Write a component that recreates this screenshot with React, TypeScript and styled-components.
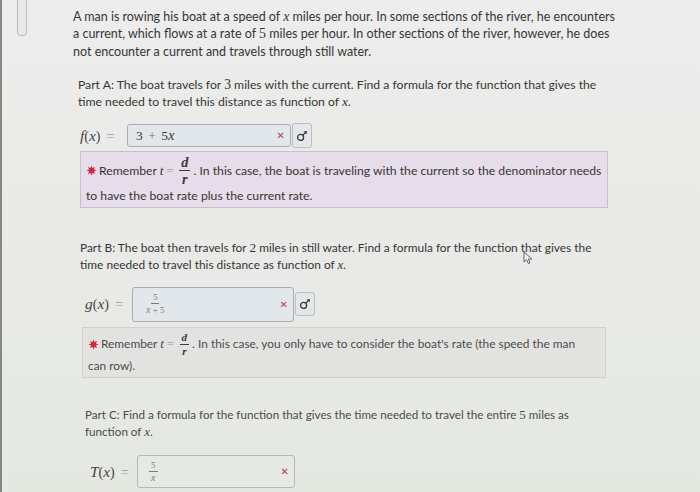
import React from 'react';
import styled, { createGlobalStyle } from 'styled-components';

const GlobalStyle = createGlobalStyle`
    html, body {
        margin: 0;
        padding: 0;
    }

    body {
        width: 700px;
        height: 492px;
        overflow: hidden;
        background: linear-gradient(180deg, #ecedec 0%, #e9eae7 55%, #e4e8e1 100%);
        font-family: Lato, "Open Sans", sans-serif;
    }
`;

function Star() {
    return (
        <StarIcon viewBox="0 0 12 12">
            <path
                d="M6 0.5 L7.1 3.4 L9.9 2.1 L8.6 4.9 L11.5 6 L8.6 7.1 L9.9 9.9 L7.1 8.6 L6 11.5 L4.9 8.6 L2.1 9.9 L3.4 7.1 L0.5 6 L3.4 4.9 L2.1 2.1 L4.9 3.4 Z"
                fill="#cf2a3f"
            />
        </StarIcon>
    );
}

function ToolGlyph() {
    return (
        <svg width="12" height="12" viewBox="0 0 12 12">
            <circle cx="4.6" cy="7.4" r="3" fill="none" stroke="#3a3a3a" strokeWidth="1.3" />
            <path d="M6.8 5.2 L9.6 2.4" stroke="#3a3a3a" strokeWidth="1.3" />
            <path d="M7.6 1.4 L10.9 1.1 L10.6 4.4 Z" fill="#3a3a3a" />
        </svg>
    );
}

function Fraction({ top, bottom, size, muted }: { top: React.ReactNode; bottom: React.ReactNode; size: number; muted?: boolean }) {
    return (
        <Frac $size={size} $muted={muted}>
            <Num>{top}</Num>
            <Den>{bottom}</Den>
        </Frac>
    );
}

function App() {
    return (
        <Page>
            <GlobalStyle />
            <ScrollThumb />

            <Section $indent={73} $gap={0} $size={12.5}>
                <Para>
                    A man is rowing his boat at a speed of <V>x</V> miles per hour. In some sections of the river, he encounters
                    <br />
                    a current, which flows at a rate of <N>5</N> miles per hour. In other sections of the river, however, he does
                    <br />
                    not encounter a current and travels through still water.
                </Para>
            </Section>

            <Section $indent={78} $gap={15.5} $size={12.2}>
                <Para>
                    Part A: The boat travels for <N>3</N> miles with the current. Find a formula for the function that gives the
                    <br />
                    time needed to travel this distance as function of <V>x</V>.
                </Para>
            </Section>

            <AnswerRow $indent={80} $gap={12.5}>
                <Label>
                    <V>f</V>(<V>x</V>)<Eq>=</Eq>
                </Label>
                <InputBox $width={164} $height={23}>
                    <Expr>
                        3 <Op>+</Op> 5<V>x</V>
                    </Expr>
                    <ClearMark>✕</ClearMark>
                </InputBox>
                <ToolButton $height={23}>
                    <ToolGlyph />
                </ToolButton>
            </AnswerRow>

            <Hint $indent={80} $width={528} $gap={3} $tone="purple">
                <HintLine>
                    <Star />
                    Remember <V>t</V> <Eq>=</Eq>
                    <Fraction size={13} top={<V>d</V>} bottom={<V>r</V>} />. In this case, the boat is traveling with the current so the denominator needs
                </HintLine>
                <HintTail>to have the boat rate plus the current rate.</HintTail>
            </Hint>

            <Section $indent={80} $gap={31} $size={11.9}>
                <Para>
                    Part B: The boat then travels for <N>2</N> miles in still water. Find a formula for the function that gives the
                    <br />
                    time needed to travel this distance as function of <V>x</V>.
                </Para>
            </Section>

            <AnswerRow $indent={85} $gap={13}>
                <Label>
                    <V>g</V>(<V>x</V>)<Eq>=</Eq>
                </Label>
                <InputBox $width={162} $height={35}>
                    <Fraction size={9} muted top="5" bottom={<><V>x</V> + 5</>} />
                    <ClearMark>✕</ClearMark>
                </InputBox>
                <ToolButton $height={22}>
                    <ToolGlyph />
                </ToolButton>
            </AnswerRow>

            <Hint $indent={82} $width={524} $gap={5} $tone="gray">
                <HintLine>
                    <Star />
                    Remember <V>t</V> <Eq>=</Eq>
                    <Fraction size={10} top={<V>d</V>} bottom={<V>r</V>} />. In this case, you only have to consider the boat's rate (the speed the man
                </HintLine>
                <HintTail>can row).</HintTail>
            </Hint>

            <Section $indent={85} $gap={28} $size={11.65} $muted>
                <Para>
                    Part C: Find a formula for the function that gives the time needed to travel the entire <N>5</N> miles as
                    <br />
                    function of <V>x</V>.
                </Para>
            </Section>

            <AnswerRow $indent={90} $gap={13.5}>
                <Label>
                    <V>T</V>(<V>x</V>)<Eq>=</Eq>
                </Label>
                <InputBox $width={158} $height={33} $plain>
                    <Fraction size={9} muted top="5" bottom={<V>x</V>} />
                    <ClearMark>✕</ClearMark>
                </InputBox>
            </AnswerRow>

            <Cursor viewBox="0 0 10 14">
                <path d="M1 1 L1 11 L3.6 8.6 L5.4 12.6 L7 11.9 L5.3 8 L8.8 8 Z" fill="#f4f4f4" stroke="#555" strokeWidth="0.9" />
            </Cursor>
        </Page>
    );
}

const Page = styled.div`
    position: relative;
    height: 492px;
    box-sizing: border-box;
    border-left: 2px solid #858782;
    padding-top: 7.5px;
`;

const ScrollThumb = styled.div`
    position: absolute;
    left: 15px;
    top: -6px;

    width: 8px;
    height: 40px;

    border: 1.5px solid #b7bbc0;
    border-radius: 4px;
    background-color: #e7e9eb;
`;

const Section = styled.section<{ $indent: number; $gap: number; $size: number; $muted?: boolean }>`
    margin-left: ${p => p.$indent - 2}px;
    margin-top: ${p => p.$gap}px;

    font-size: ${p => p.$size}px;
    color: ${p => (p.$muted ? '#4a4c4a' : '#363636')};
`;

const Para = styled.p`
    margin: 0;
    line-height: 17.5px;
    white-space: nowrap;
`;

const V = styled.span`
    font-family: "Liberation Serif", "DejaVu Serif", serif;
    font-style: italic;
    font-size: 1.1em;
`;

const N = styled.span`
    font-family: "Liberation Serif", "DejaVu Serif", serif;
    font-size: 1.12em;
`;

const Eq = styled.span`
    font-family: "Liberation Serif", "DejaVu Serif", serif;
    color: #9a9c9e;
    margin: 0 3px;
`;

const Op = styled.span`
    color: #777;
    margin: 0 2px;
`;

const AnswerRow = styled.div<{ $indent: number; $gap: number }>`
    display: flex;
    align-items: center;

    margin-left: ${p => p.$indent - 2}px;
    margin-top: ${p => p.$gap}px;
`;

const Label = styled.span`
    width: 47px;
    flex: none;

    font-family: "Liberation Serif", "DejaVu Serif", serif;
    font-size: 14px;
    color: #444;
    white-space: nowrap;

    ${Eq} {
        margin-left: 6px;
    }
`;

const InputBox = styled.div<{ $width: number; $height: number; $plain?: boolean }>`
    display: flex;
    justify-content: space-between;
    align-items: center;

    width: ${p => p.$width}px;
    height: ${p => p.$height}px;
    box-sizing: border-box;
    padding: 0 5px 0 8px;

    border: 1.5px solid ${p => (p.$plain ? '#b4b9b4' : '#a5acb4')};
    border-radius: 3px;
    background-color: ${p => (p.$plain ? '#e5e9e4' : '#e2e7eb')};
`;

const Expr = styled.span`
    font-family: "Liberation Serif", "DejaVu Serif", serif;
    font-size: 13.5px;
    color: #3a3a3a;
`;

const ClearMark = styled.span`
    font-family: "DejaVu Sans", sans-serif;
    font-size: 10px;
    font-weight: 700;
    color: #c43a52;
`;

const ToolButton = styled.div<{ $height: number }>`
    display: flex;
    justify-content: center;
    align-items: center;

    width: 18px;
    height: ${p => p.$height}px;
    margin-left: 1px;

    border: 1px solid #b9bec3;
    border-radius: 3px;
    background-color: #e4e7ea;
`;

const Hint = styled.div<{ $indent: number; $width: number; $gap: number; $tone: 'purple' | 'gray' }>`
    width: ${p => p.$width}px;
    box-sizing: border-box;
    margin-left: ${p => p.$indent - 2}px;
    margin-top: ${p => p.$gap}px;
    padding: ${p => (p.$tone === 'purple' ? '3px 6px 3px 5px' : '4px 6px 3px 5px')};

    border: 1px solid ${p => (p.$tone === 'purple' ? '#cbbdd0' : '#d0d1ce')};
    background-color: ${p => (p.$tone === 'purple' ? '#e7dce9' : '#e2e3e1')};

    font-size: ${p => (p.$tone === 'purple' ? 12.2 : 11.9)}px;
    color: ${p => (p.$tone === 'purple' ? '#363636' : '#4c4c4c')};
`;

const HintLine = styled.div`
    display: flex;
    align-items: center;
    white-space: pre;
    line-height: 16px;
`;

const HintTail = styled.div`
    line-height: 16px;
    margin-top: 1px;
`;

const StarIcon = styled.svg`
    width: 11px;
    height: 11px;
    margin-right: 2px;
    flex: none;
`;

const Frac = styled.span<{ $size: number; $muted?: boolean }>`
    display: inline-flex;
    flex-direction: column;
    align-items: center;
    margin: 0 3px;

    font-family: "Liberation Serif", "DejaVu Serif", serif;
    font-size: ${p => p.$size}px;
    color: ${p => (p.$muted ? '#7a7d80' : '#3a3a3a')};
    line-height: 1;
    white-space: nowrap;

    ${V} {
        font-weight: ${p => (p.$muted ? 400 : 700)};
    }
`;

const Num = styled.span`
    padding: 0 2px 1px;
    border-bottom: 1px solid currentColor;
`;

const Den = styled.span`
    padding: 1px 2px 0;
`;

const Cursor = styled.svg`
    position: absolute;
    left: 521px;
    top: 251px;
    width: 10px;
    height: 14px;
`;

export default App;
